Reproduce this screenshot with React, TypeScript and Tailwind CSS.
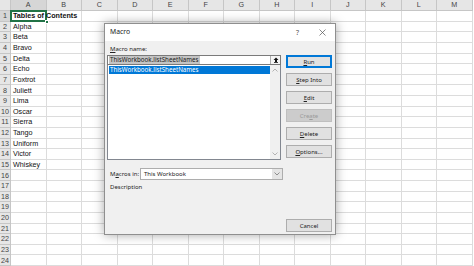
import React from 'react'

const names = ['Tables of Contents', 'Alpha', 'Beta', 'Bravo', 'Delta', 'Echo', 'Foxtrot', 'Juliett', 'Lima', 'Oscar', 'Sierra', 'Tango', 'Uniform', 'Victor', 'Whiskey']
const cols = 'ABCDEFGHIJKLM'.split('')
const rowNums = Array.from({ length: 24 }, (_, i) => i + 1)

const DlgButton = ({ children, primary, disabled }: { children: React.ReactNode; primary?: boolean; disabled?: boolean }) => (
    <div
        className={`h-[13px] w-[46px] flex items-center justify-center text-[6px] leading-none border ${primary ? 'border-[#0078d7] outline outline-[#0078d7] -outline-offset-2' : disabled ? 'border-[#bfbfbf]' : 'border-[#adadad]'} ${disabled ? 'bg-[#cccccc] text-[#9a9a9a]' : 'bg-[#e1e1e1] text-[#222]'}`}
    >
        {children}
    </div>
)

const Sheet = () => (
    <div className="grid grid-cols-[11px_repeat(13,35.5px)] grid-rows-[11px_repeat(24,10.625px)] bg-white text-[7.2px] leading-none text-[#111]">
        <div className="bg-[#e6e6e6] border-r border-b border-[#c6c6c6]" />
        {cols.map((c) => (
            <div key={c} className={`flex items-center justify-center border-r border-b border-[#c6c6c6] text-[#444] ${c === 'A' ? 'bg-[#d6d6d6]' : 'bg-[#e6e6e6]'}`}>{c}</div>
        ))}
        {rowNums.map((r) => (
            <React.Fragment key={r}>
                <div className={`flex items-center justify-center border-r border-b border-[#c6c6c6] text-[#444] ${r === 1 ? 'bg-[#d6d6d6]' : 'bg-[#e6e6e6]'}`}>{r}</div>
                {cols.map((c) => {
                    const text = c === 'A' ? names[r - 1] : undefined
                    const selected = c === 'A' && r === 1
                    return (
                        <div key={c} className={`relative flex items-center border-r border-b border-[#dcdcdc] ${selected ? 'z-10' : ''}`}>
                            {text && (
                                <span className={`relative z-10 pl-[2px] whitespace-nowrap ${r === 1 ? 'font-bold' : ''}`}>{text}</span>
                            )}
                            {selected && (
                                <>
                                    <div className="absolute -left-px -top-px w-[37px] h-[12px] border-2 border-[#217346]" />
                                    <div className="absolute right-[-3px] bottom-[-3px] w-[4px] h-[4px] bg-[#217346] border border-white" />
                                </>
                            )}
                        </div>
                    )
                })}
            </React.Fragment>
        ))}
    </div>
)

const MacroDialog = () => (
    <div className="absolute left-[104px] top-[23px] w-[232px] h-[212px] flex flex-col border border-[#8f8f8f] shadow-[0_0_10px_rgba(0,0,0,0.35)] font-['Noto_Sans','Liberation_Sans',sans-serif] text-[6px] leading-none text-[#222]">
        <div className="h-[17px] bg-white flex items-center pl-[5px] pr-[9px]">
            <span className="text-[6.8px]">Macro</span>
            <span className="ml-auto mr-[20px] text-[7px] text-[#555]">?</span>
            <svg width="7" height="7" viewBox="0 0 7 7"><path d="M0.5 0.5 L6.5 6.5 M6.5 0.5 L0.5 6.5" stroke="#555" strokeWidth="0.7" /></svg>
        </div>
        <div className="flex-1 bg-[#f0f0f0] flex flex-col pl-[2px] pr-[3px] pb-[2px]">
            <div className="flex gap-[5px]">
                <div className="w-[175px] flex flex-col">
                    <div className="h-[14px] flex items-center pl-[3px] pt-[2px]">
                        <span><u>M</u>acro name:</span>
                    </div>
                    <div className="h-[10px] flex border border-[#7a7a7a] bg-white">
                        <div className="flex-1 flex items-center pl-[1px]">
                            <span className="bg-[#c4c4c4] px-[1px] py-[1px] text-[6.2px]">ThisWorkbook.listSheetNames</span>
                        </div>
                        <div className="w-[10px] flex items-center justify-center border-l border-[#adadad] bg-[#f4f4f4]">
                            <svg width="6" height="6" viewBox="0 0 6 6"><path d="M3 0.5 L5.5 3 H4 V5 H2 V3 H0.5 Z" fill="#111" /><rect x="1" y="5.2" width="4" height="0.8" fill="#111" /></svg>
                        </div>
                    </div>
                    <div className="h-[95px] flex border border-t-0 border-[#828790] bg-white">
                        <div className="flex-1 pt-px pl-px">
                            <div className="h-[8px] flex items-center pl-[1px] bg-[#0078d7] text-white text-[6.2px]">ThisWorkbook.listSheetNames</div>
                        </div>
                        <div className="w-[10px] flex flex-col items-center justify-between py-[3px] bg-[#f0f0f0]">
                            <svg width="6" height="4" viewBox="0 0 6 4"><path d="M0.5 3.5 L3 1 L5.5 3.5" fill="none" stroke="#a3a3a3" strokeWidth="0.8" /></svg>
                            <svg width="6" height="4" viewBox="0 0 6 4"><path d="M0.5 0.5 L3 3 L5.5 0.5" fill="none" stroke="#a3a3a3" strokeWidth="0.8" /></svg>
                        </div>
                    </div>
                </div>
                <div className="flex flex-col gap-[5px] pt-[14px]">
                    <DlgButton primary><u>R</u>un</DlgButton>
                    <DlgButton><u>S</u>tep Into</DlgButton>
                    <DlgButton><u>E</u>dit</DlgButton>
                    <DlgButton disabled>Cre<u>a</u>te</DlgButton>
                    <DlgButton><u>D</u>elete</DlgButton>
                    <DlgButton><u>O</u>ptions...</DlgButton>
                </div>
            </div>
            <div className="mt-[8px] flex items-center w-[176px]">
                <span className="w-[33px] pl-[3px]">M<u>a</u>cros in:</span>
                <div className="flex-1 h-[12px] flex border border-[#adadad] bg-white">
                    <div className="flex-1 flex items-center pl-[3px]">This Workbook</div>
                    <div className="w-[10px] flex items-center justify-center bg-[#e5e5e5]">
                        <svg width="6" height="4" viewBox="0 0 6 4"><path d="M0.5 0.5 L3 3 L5.5 0.5" fill="none" stroke="#777" strokeWidth="0.8" /></svg>
                    </div>
                </div>
            </div>
            <div className="mt-[4px] pl-[3px]">Description</div>
            <div className="mt-auto self-end">
                <DlgButton>Cancel</DlgButton>
            </div>
        </div>
    </div>
)

export default function App() {
    return (
        <div className="relative w-[474px] h-[266px] overflow-hidden bg-white font-['Liberation_Sans',sans-serif]">
            <Sheet />
            <MacroDialog />
        </div>
    )
}
